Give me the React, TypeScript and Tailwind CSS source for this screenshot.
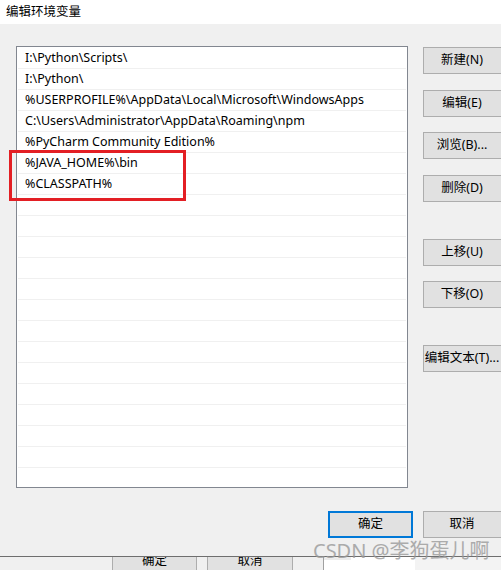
import React from "react";

const paths = [
  "I:\\Python\\Scripts\\",
  "I:\\Python\\",
  "%USERPROFILE%\\AppData\\Local\\Microsoft\\WindowsApps",
  "C:\\Users\\Administrator\\AppData\\Roaming\\npm",
  "%PyCharm Community Edition%",
  "%JAVA_HOME%\\bin",
  "%CLASSPATH%",
];

const rows = [...paths, ...Array(14).fill("")];

const font = {
  fontFamily: '"Segoe UI", "Noto Sans", "Noto Sans CJK SC", sans-serif',
};

function SideButton({ label, className = "" }: { label: string; className?: string }) {
  return (
    <button
      className={`h-[27px] w-[90px] shrink-0 border border-[#adadad] bg-[#e1e1e1] text-[12.5px] text-black pr-[12px] ${className}`}
    >
      {label}
    </button>
  );
}

export default function App() {
  return (
    <div
      className="relative w-[501px] h-[570px] overflow-hidden bg-[#f0f0f0] flex flex-col"
      style={font}
    >
      {/* title bar */}
      <div className="h-[24px] shrink-0 bg-white px-[6px] flex items-center text-[12.5px] text-black">
        编辑环境变量
      </div>

      <div className="flex pt-[22px] pl-[16px]">
        {/* path list */}
        <div className="w-[392px] h-[442px] shrink-0 border border-[#828790] bg-white overflow-hidden px-[1px] pt-[1px]">
          {rows.map((p, i) => (
            <div
              key={i}
              className="h-[21px] border-b border-[#f0f0f0] pl-[7px] flex items-center text-[12.5px] text-black whitespace-nowrap"
            >
              {p}
            </div>
          ))}
        </div>

        {/* action buttons */}
        <div className="ml-[15px] pt-[1px] flex flex-col shrink-0">
          <SideButton label="新建(N)" />
          <SideButton label="编辑(E)" className="mt-[16px]" />
          <SideButton label="浏览(B)..." className="mt-[15px]" />
          <SideButton label="删除(D)" className="mt-[16px]" />
          <SideButton label="上移(U)" className="mt-[37px]" />
          <SideButton label="下移(O)" className="mt-[15px]" />
          <SideButton label="编辑文本(T)..." className="mt-[37px] whitespace-nowrap pr-[4px]" />
        </div>
      </div>

      {/* dialog buttons */}
      <div className="flex pl-[328px] pt-[23px] gap-[10px]">
        <button className="h-[27px] w-[85px] shrink-0 border-2 border-[#0078d7] bg-[#e1e1e1] text-[12.5px] text-black">
          确定
        </button>
        <button className="h-[27px] w-[90px] shrink-0 border border-[#adadad] bg-[#e1e1e1] text-[12.5px] text-black pr-[12px]">
          取消
        </button>
      </div>

      {/* window behind */}
      <div className="mt-[18px] h-[14px] border-t border-[#6e6e6e] flex overflow-hidden">
        <div className="w-[323px] shrink-0 flex bg-[#f0f0f0]">
          <div className="ml-[112px] w-[85px] h-[20px] -mt-[6px] border border-[#adadad] bg-[#e1e1e1] text-[12.5px] text-black flex items-center justify-center">
            确定
          </div>
          <div className="ml-[10px] w-[86px] h-[20px] -mt-[6px] border border-[#adadad] bg-[#e1e1e1] text-[12.5px] text-black flex items-center justify-center">
            取消
          </div>
        </div>
        <div className="w-[92px] shrink-0 border-l border-[#a0a0a0] bg-white">
          <div className="w-[27px] h-[3px] bg-[#ececec]" />
        </div>
        <div className="flex-1 bg-[#f3f3f3]" />
      </div>

      {/* red annotation box */}
      <div className="absolute left-[9px] top-[150px] w-[177px] h-[51px] border-[3px] border-[#e31f24]" />

      {/* watermark */}
      <div
        className="absolute left-[313px] top-[539px] text-[20px] leading-[24px] text-[#9a9a9a] opacity-80 whitespace-nowrap"
        style={{ fontFamily: '"Noto Sans", "Noto Sans CJK SC", sans-serif' }}
      >
        CSDN @李狗蛋儿啊
      </div>
    </div>
  );
}
